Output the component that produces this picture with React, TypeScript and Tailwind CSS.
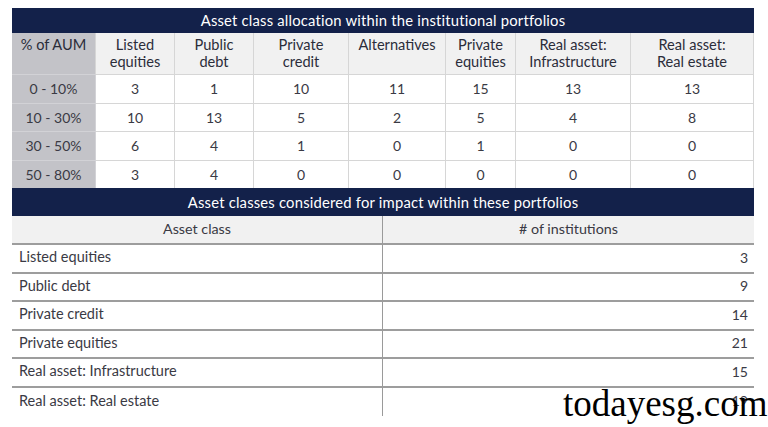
import React from "react";

const cols = [84, 79, 79, 95, 97, 70, 115, 123];
const headers = [
  ["% of AUM"],
  ["Listed", "equities"],
  ["Public", "debt"],
  ["Private", "credit"],
  ["Alternatives"],
  ["Private", "equities"],
  ["Real asset:", "Infrastructure"],
  ["Real asset:", "Real estate"],
];
const rows = [
  ["0 - 10%", "3", "1", "10", "11", "15", "13", "13"],
  ["10 - 30%", "10", "13", "5", "2", "5", "4", "8"],
  ["30 - 50%", "6", "4", "1", "0", "1", "0", "0"],
  ["50 - 80%", "3", "4", "0", "0", "0", "0", "0"],
];
const impact = [
  ["Listed equities", "3"],
  ["Public debt", "9"],
  ["Private credit", "14"],
  ["Private equities", "21"],
  ["Real asset: Infrastructure", "15"],
  ["Real asset: Real estate", "19"],
];

export default function App() {
  const grid = { gridTemplateColumns: cols.map((c) => c + "px").join(" ") };
  return (
    <div
      className="relative w-[768px] h-[427px] bg-white overflow-hidden"
      style={{ fontFamily: "Lato, 'Open Sans', sans-serif" }}
    >
      <div className="absolute left-[12px] top-[8px] w-[742px]">
        <div className="h-[25px] bg-[#13214a] text-white text-[14.8px] flex items-center justify-center tracking-[0.2px]">
          Asset class allocation within the institutional portfolios
        </div>
        <div className="grid" style={grid}>
          {headers.map((h, i) => (
            <div
              key={i}
              className={`h-[41px] flex flex-col items-center justify-start pt-[3px] text-[14.6px] leading-[17px] text-[#2b2d3a] border-r border-[#d6d6d6] ${
                i === 0 ? "bg-[#c3c3c8]" : "bg-[#f1f1f1]"
              }`}
            >
              {h.map((l, j) => (
                <span key={j}>{l}</span>
              ))}
            </div>
          ))}
          {rows.map((r, ri) =>
            r.map((v, ci) => (
              <div
                key={ri + "-" + ci}
                className={`h-[28.5px] flex items-center justify-center text-[14px] text-[#3a3a44] border-t border-r ${
                  ci === 0
                    ? "bg-[#c3c3c8] border-[#d2d2d6]"
                    : "bg-white border-[#d6d6d6]"
                }`}
              >
                {v}
              </div>
            ))
          )}
        </div>
        <div className="h-[28px] bg-[#13214a] text-white text-[14.8px] flex items-center justify-center tracking-[0.2px]">
          Asset classes considered for impact within these portfolios
        </div>
        <div className="grid grid-cols-[371px_371px]">
          <div className="h-[29px] bg-[#f1f1f1] flex items-center justify-center pb-[2px] text-[14.3px] text-[#3a3a44] border-r border-[#9a9a9a] border-b-2 border-b-[#9d9d9d]">
            Asset class
          </div>
          <div className="h-[29px] bg-[#f1f1f1] flex items-center justify-center pb-[2px] text-[14.3px] text-[#3a3a44] border-b-2 border-[#9d9d9d]">
            # of institutions
          </div>
          {impact.map(([a, n], i) => (
            <React.Fragment key={i}>
              <div
                className={`h-[28.5px] flex items-center pl-[7px] pb-[2px] text-[14.5px] text-[#3a3a44] border-r border-[#9a9a9a] ${
                  i < impact.length - 1 ? "border-b-2 border-b-[#9d9d9d]" : ""
                }`}
              >
                {a}
              </div>
              <div
                className={`h-[28.5px] flex items-center justify-end pr-[6px] pb-[2px] text-[14px] text-[#3a3a44] ${
                  i < impact.length - 1 ? "border-b-2 border-[#9d9d9d]" : ""
                }`}
              >
                {n}
              </div>
            </React.Fragment>
          ))}
        </div>
      </div>
      <div
        className="absolute left-[563px] top-[383px] text-[37px] leading-[42px] text-black"
        style={{ fontFamily: "'Liberation Serif', serif" }}
      >
        todayesg.com
      </div>
    </div>
  );
}
